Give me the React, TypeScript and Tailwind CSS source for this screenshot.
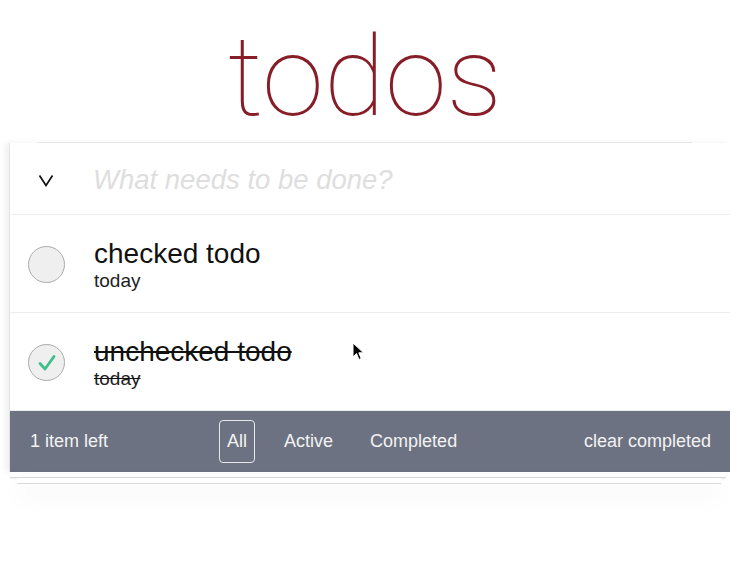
import { useState } from 'react'

type Todo = {
  id: number
  title: string
  when: string
  done: boolean
}

const FILTERS = ['All', 'Active', 'Completed']

function Chevron() {
  return (
    <svg width="16" height="13" viewBox="0 0 16 13" fill="none">
      <polyline points="1.5,1.5 8,11.5 14.5,1.5" stroke="#111" strokeWidth="1.7" strokeLinejoin="miter" />
    </svg>
  )
}

function Toggle({ done }: { done: boolean }) {
  return (
    <div className="flex h-[37px] w-[37px] items-center justify-center rounded-full border-[1.5px] border-[#ababab] bg-[#efefef]">
      {done && (
        <svg width="20" height="18" viewBox="0 0 20 18" fill="none">
          <path d="M3 9.5 L8 15 L17 2.5" stroke="#3dbf8c" strokeWidth="2.8" strokeLinecap="round" strokeLinejoin="round" />
        </svg>
      )}
    </div>
  )
}

function Cursor() {
  return (
    <svg width="14" height="20" viewBox="0 0 14 20" className="absolute left-[352px] top-[342px]">
      <path d="M1 1 L1 15 L4.5 11.5 L7 17.5 L9.2 16.5 L6.8 10.8 L11.5 10.8 Z" fill="#000" stroke="#fff" strokeWidth="1" />
    </svg>
  )
}

export default function App() {
  const [todos] = useState<Todo[]>([
    { id: 1, title: 'checked todo', when: 'today', done: false },
    { id: 2, title: 'unchecked todo', when: 'today', done: true },
  ])
  const [filter, setFilter] = useState('All')
  const left = todos.filter((t) => !t.done).length

  return (
    <div className="relative h-[574px] w-full overflow-hidden bg-white font-['Liberation_Sans',Arial,sans-serif] text-[#111]">
      <h1 className="pt-[21px] text-center font-['Roboto',sans-serif] text-[112px] font-thin leading-none text-[#861d27]">
        todos
      </h1>

      <div className="mx-[38px] mt-[9px] h-px bg-[#ececec]" />

      <div className="ml-[9px] w-[722px] border-l border-[#e4e4e4] bg-white shadow-[-4px_0_6px_rgba(0,0,0,0.06)]">
        <div className="flex h-[72px] items-center border-b border-[#ededed]">
          <div className="pl-[28px] pr-[39px] pt-[3px]">
            <Chevron />
          </div>
          <span className="pt-[2px] text-[27.5px] italic text-[#dedede]">What needs to be done?</span>
        </div>

        {todos.map((todo) => (
          <div key={todo.id} className="flex h-[98px] items-center border-b border-[#ededed]">
            <div className="w-[84px] pl-[18px] pt-[2px]">
              <Toggle done={todo.done} />
            </div>
            <div className={todo.done ? 'pt-[2px] line-through' : 'pt-[2px]'}>
              <div className="text-[28px] leading-[32px] text-[#111]">{todo.title}</div>
              <div className="text-[19px] leading-[22px] text-[#222]">{todo.when}</div>
            </div>
          </div>
        ))}

        <div className="flex h-[61px] items-center bg-[#6d7282] px-[20px] text-[18px] text-[#f2f2f2]">
          <span>
            {left} item{left === 1 ? '' : 's'} left
          </span>
          <div className="ml-[111px] flex items-center gap-[21px]">
            {FILTERS.map((f) => (
              <button
                key={f}
                type="button"
                onClick={() => setFilter(f)}
                className={
                  f === filter
                    ? 'flex h-[43px] items-center rounded-[4px] border-[1.5px] border-[#e8e8e8] px-[7px]'
                    : 'flex h-[43px] items-center rounded-[4px] border-[1.5px] border-transparent px-[7px]'
                }
              >
                {f}
              </button>
            ))}
          </div>
          <span className="ml-auto">clear completed</span>
        </div>
      </div>

      <div className="ml-[10px] h-[6px] w-[716px] border-b border-[#d6d6d6] bg-white shadow-[0_1px_2px_rgba(0,0,0,0.06)]" />
      <div className="ml-[17px] h-[6px] w-[704px] border-b border-[#d9d9d9] bg-white shadow-[0_10px_24px_rgba(0,0,0,0.08)]" />

      <Cursor />
    </div>
  )
}
